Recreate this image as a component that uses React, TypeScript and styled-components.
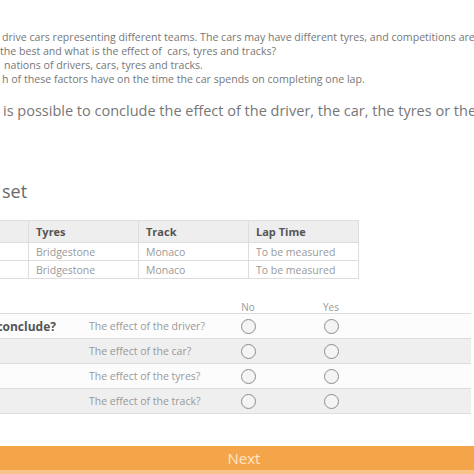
import React from 'react';
import styled, { createGlobalStyle } from 'styled-components';

const GlobalStyle = createGlobalStyle`
  html, body {
    margin: 0;
    padding: 0;
    background: #fff;
    overflow: hidden;
  }
  body {
    font-family: 'Open Sans', 'Noto Sans', sans-serif;
    color: #777;
  }
`;

const Page = styled.div`
  width: 474px;
  height: 474px;
  overflow: hidden;
  display: flex;
  flex-direction: column;
`;

const Intro = styled.div`
  padding-top: 30px;
  font-size: 10.6px;
  line-height: 14px;
  color: #777;
`;

const Line = styled.div<{ $indent: number }>`
  white-space: nowrap;
  padding-left: ${(p) => p.$indent}px;
`;

const Question = styled.div`
  margin-top: 15px;
  padding-left: 3px;
  font-size: 14.5px;
  line-height: 20px;
  color: #777;
  white-space: nowrap;
`;

const Heading = styled.div`
  margin-top: 58px;
  padding-left: 2px;
  font-size: 18px;
  line-height: 24px;
  color: #6a6a6a;
`;

const DataTable = styled.table`
  align-self: flex-start;
  flex-shrink: 0;
  margin-top: 17px;
  margin-left: -192px;
  width: 551px;
  border-collapse: collapse;
  table-layout: fixed;
  font-size: 10.5px;
  th, td {
    width: 95px;
    border: 1px solid #ddd;
    padding: 0 7px;
    text-align: left;
    white-space: nowrap;
    overflow: hidden;
  }
  th {
    height: 21px;
    background: #eee;
    color: #555;
    font-weight: 700;
    font-size: 11px;
  }
  td {
    height: 17px;
    color: #999;
  }
`;

const Survey = styled.div`
  margin-top: 22px;
  width: 471px;
  display: grid;
  grid-template-columns: 89px 121px 76px 90px 1fr;
`;

const HeadCell = styled.div`
  height: 12px;
  font-size: 10px;
  line-height: 12px;
  color: #999;
  text-align: center;
  border-bottom: 1px solid #ddd;
`;

const Cell = styled.div<{ $shade: boolean }>`
  height: 24px;
  display: flex;
  align-items: center;
  background: ${(p) => (p.$shade ? '#efefef' : '#fcfcfc')};
  border-bottom: 1px solid #ddd;
`;

const LabelCell = styled(Cell)`
  justify-content: flex-end;
  padding-right: 33px;
  font-size: 12px;
  font-weight: 700;
  color: #555;
  white-space: nowrap;
`;

const TextCell = styled(Cell)`
  font-size: 10.5px;
  color: #999;
  white-space: nowrap;
`;

const RadioCell = styled(Cell)`
  justify-content: center;
`;

const Radio = styled.span`
  width: 13px;
  height: 13px;
  border-radius: 50%;
  border: 1.2px solid #8c8c8c;
  background: #f4f4f4;
`;

const NextButton = styled.button`
  margin-top: 32px;
  height: 24px;
  width: 100%;
  border: none;
  border-bottom: 4px solid #f9c48a;
  box-sizing: content-box;
  background: #f4a54a;
  color: #fde6c6;
  font-family: 'Open Sans', 'Noto Sans', sans-serif;
  font-size: 15px;
  padding: 0 0 0 7px;
  line-height: 24px;
`;

const questions = [
  'The effect of the driver?',
  'The effect of the car?',
  'The effect of the tyres?',
  'The effect of the track?',
];

const rows = [
  ['Alonso', 'Ferrari', 'Bridgestone', 'Monaco', 'To be measured'],
  ['Alonso', 'Ferrari', 'Bridgestone', 'Monaco', 'To be measured'],
];

export default function App() {
  return (
    <>
      <GlobalStyle />
      <Page>
        <Intro>
          <Line $indent={2}> drive cars representing different teams. The cars may have different tyres, and competitions are on different tracks.</Line>
          <Line $indent={0}>the best and what is the effect of &nbsp;cars, tyres and tracks?</Line>
          <Line $indent={4}>nations of drivers, cars, tyres and tracks.</Line>
          <Line $indent={2}>h of these factors have on the time the car spends on completing one lap.</Line>
        </Intro>
        <Question>is possible to conclude the effect of the driver, the car, the tyres or the track?</Question>
        <Heading>set</Heading>
        <DataTable>
          <thead>
            <tr>
              <th>Driver</th>
              <th>Car</th>
              <th>Tyres</th>
              <th>Track</th>
              <th>Lap Time</th>
            </tr>
          </thead>
          <tbody>
            {rows.map((r, i) => (
              <tr key={i}>
                {r.map((c, j) => (
                  <td key={j}>{c}</td>
                ))}
              </tr>
            ))}
          </tbody>
        </DataTable>
        <Survey>
          <HeadCell />
          <HeadCell />
          <HeadCell>No</HeadCell>
          <HeadCell>Yes</HeadCell>
          <HeadCell />
          {questions.map((q, i) => {
            const shade = i % 2 === 1;
            return (
              <React.Fragment key={q}>
                <LabelCell $shade={shade}>{i === 0 ? 'What is it possible to conclude?' : ''}</LabelCell>
                <TextCell $shade={shade}>{q}</TextCell>
                <RadioCell $shade={shade}>
                  <Radio />
                </RadioCell>
                <RadioCell $shade={shade}>
                  <Radio />
                </RadioCell>
                <Cell $shade={shade} />
              </React.Fragment>
            );
          })}
        </Survey>
        <NextButton>Next</NextButton>
      </Page>
    </>
  );
}
